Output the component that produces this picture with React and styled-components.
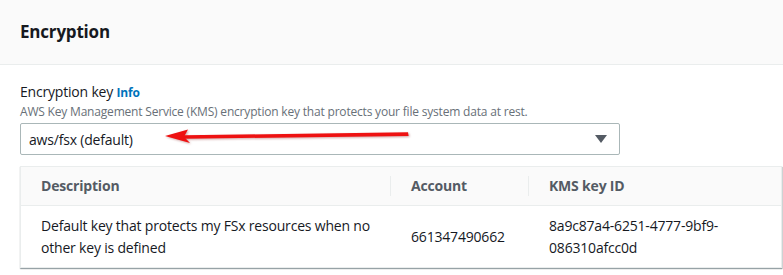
import styled, { createGlobalStyle } from "styled-components";

const Global = createGlobalStyle`
  body {
    margin: 0;
    background: #fff;
    font-family: "Open Sans", "Noto Sans", Arial, sans-serif;
    letter-spacing: -0.012em;
    color: #16191f;
  }
`;

export default function App() {
  return (
    <>
      <Global />
      <Panel>
        <Header>
          <Title>Encryption</Title>
        </Header>
        <Body>
          <Label>
            Encryption key <Info>Info</Info>
          </Label>
          <Hint>
            AWS Key Management Service (KMS) encryption key that protects your
            file system data at rest.
          </Hint>
          <SelectWrap>
            <Select>
              <span>aws/fsx (default)</span>
              <Caret />
            </Select>
            <Arrow width="252" height="26" viewBox="0 0 252 26">
              <path d="M24 12.3 L248 9.2 L248.6 13 L24 15.7 Z" fill="#ee1111" />
              <path d="M5 13 L28 6.5 L24 13.8 L30 20 Z" fill="#ee1111" />
            </Arrow>
          </SelectWrap>
          <Table>
            <Row $head>
              <Cell $head $sep>Description</Cell>
              <Cell $head $sep>Account</Cell>
              <Cell $head>KMS key ID</Cell>
            </Row>
            <Row>
              <Cell>
                Default key that protects my FSx resources when no other key is
                defined
              </Cell>
              <Cell>661347490662</Cell>
              <Cell>8a9c87a4-6251-4777-9bf9-086310afcc0d</Cell>
            </Row>
          </Table>
        </Body>
      </Panel>
    </>
  );
}

const Panel = styled.div`
  width: 783px;
  height: 275px;
  overflow: hidden;
`;

const Header = styled.div`
  height: 64px;
  background: #fafafa;
  border-bottom: 1px solid #eaeded;
  padding: 0 20px;
  display: flex;
  align-items: center;
`;

const Title = styled.h2`
  margin: 0 0 2px;
  font-size: 17px;
  font-weight: 700;
  color: #16191f;
`;

const Body = styled.div`
  padding: 16px 3px 0 20px;
`;

const Label = styled.div`
  font-size: 14px;
  line-height: 22px;
`;

const Info = styled.span`
  font-size: 12px;
  font-weight: 700;
  color: #0073bb;
`;

const Hint = styled.div`
  font-size: 12px;
  line-height: 16px;
  color: #687078;
`;

const SelectWrap = styled.div`
  position: relative;
  margin-top: 3px;
`;

const Select = styled.div`
  width: 600px;
  height: 32px;
  box-sizing: border-box;
  border: 1px solid #aab7b8;
  border-radius: 2px;
  padding: 0 12px 0 8px;
  display: flex;
  align-items: center;
  justify-content: space-between;
  font-size: 14px;
`;

const Caret = styled.span`
  width: 0;
  height: 0;
  border-left: 6px solid transparent;
  border-right: 6px solid transparent;
  border-top: 8px solid #545b64;
`;

const Arrow = styled.svg`
  position: absolute;
  left: 140px;
  top: 0;
  filter: drop-shadow(1px 1px 1px rgba(120, 0, 0, 0.35));
`;

const Table = styled.div`
  margin-top: 11px;
  width: 760px;
  border: 1px solid #eaeded;
  box-shadow: 0 1px 1px 0 rgba(0, 28, 36, 0.3), 1px 1px 1px 0 rgba(0, 28, 36, 0.15);
`;

const Row = styled.div`
  display: grid;
  grid-template-columns: 370px 138px 1fr;
  background: ${(p) => (p.$head ? "#fafafa" : "#fff")};
  border-bottom: ${(p) => (p.$head ? "1px solid #eaeded" : "none")};
  min-height: ${(p) => (p.$head ? "38px" : "61px")};
`;

const Cell = styled.div`
  position: relative;
  display: flex;
  align-items: center;
  padding: 0 16px 0 20px;
  font-size: 14px;
  line-height: 22px;
  font-weight: ${(p) => (p.$head ? 700 : 400)};
  color: ${(p) => (p.$head ? "#545b64" : "#16191f")};
  &::after {
    content: "";
    display: ${(p) => (p.$sep ? "block" : "none")};
    position: absolute;
    right: 0;
    top: 9px;
    bottom: 9px;
    border-right: 1px solid #eaeded;
  }
`;
